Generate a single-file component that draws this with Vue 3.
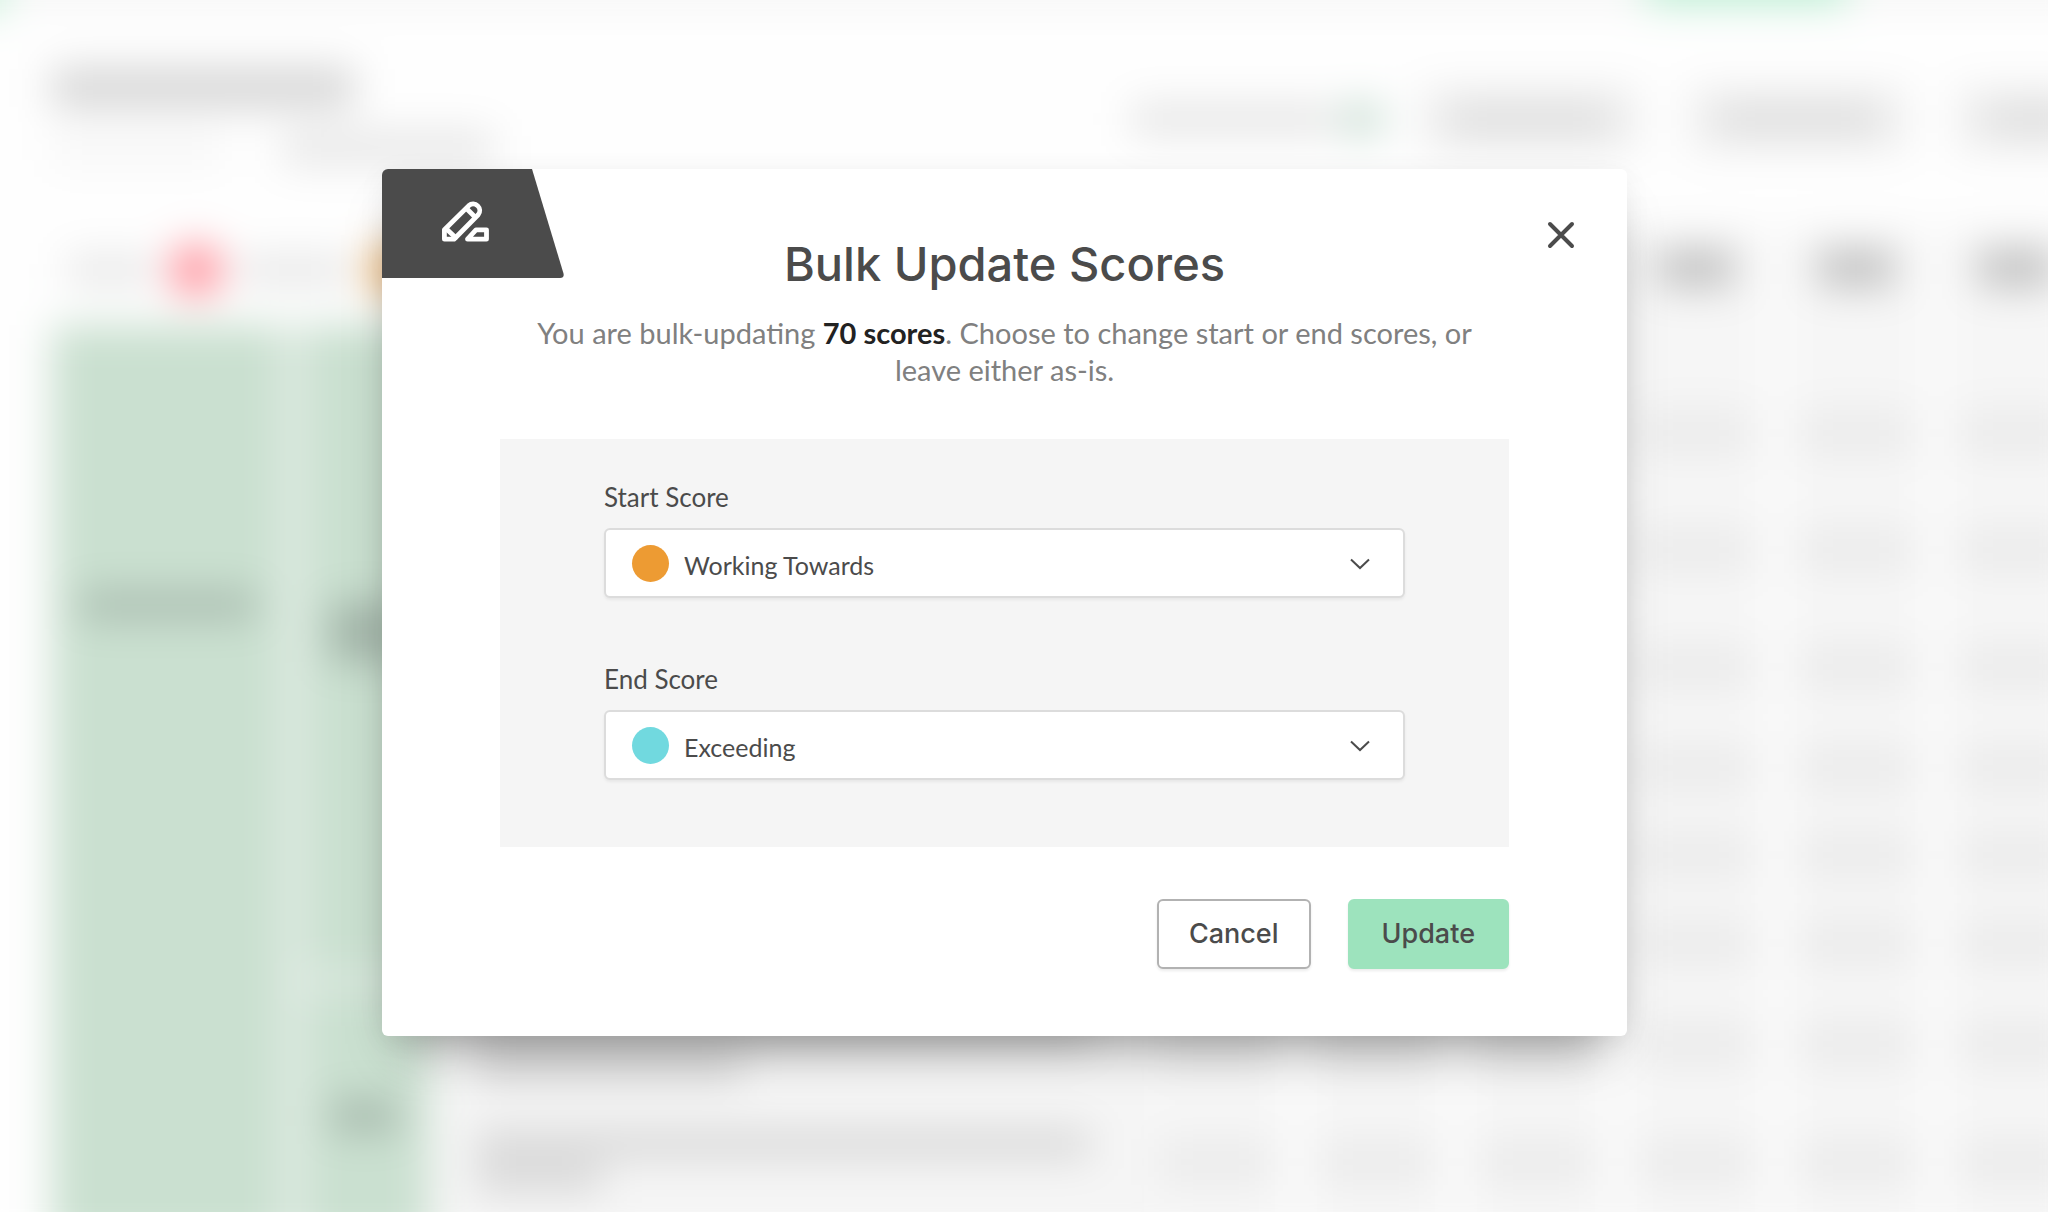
<script setup>
import { ref } from 'vue'

const scores = [
  { name: 'Emerging', color: '#fb8c96' },
  { name: 'Working Towards', color: '#ed9b33' },
  { name: 'Expected', color: '#9de3bd' },
  { name: 'Exceeding', color: '#71d9df' },
]
const fields = ref([
  { id: 'start-score', label: 'Start Score', value: 'Working Towards' },
  { id: 'end-score', label: 'End Score', value: 'Exceeding' },
])
const colorOf = (name) => scores.find((s) => s.name === name).color

const rowHeights = [114, 120, 113, 90, 84, 91, 112, 124, 120]
</script>

<template>
  <div class="page">
    <div class="backdrop" aria-hidden="true">
      <div class="topbar">
        <i class="brand"></i>
        <i class="topbar-action"></i>
      </div>
      <div class="header">
        <div class="heading">
          <i class="heading-title"></i>
          <div class="heading-tabs">
            <i class="tab-one"></i>
            <i class="tab-two"></i>
          </div>
        </div>
        <div class="toolbar">
          <i class="tool-text"></i>
          <i class="tool-toggle"></i>
          <span v-for="n in 3" :key="n" class="tool-button"><i></i></span>
        </div>
      </div>
      <div class="board">
        <div class="board-left">
          <div class="legend">
            <i class="legend-text"></i>
            <i class="legend-dot red"></i>
            <i class="legend-text wide"></i>
            <i class="legend-dot orange"></i>
          </div>
          <div class="groups">
            <div class="group first"><i></i></div>
            <div class="group-column">
              <div class="group top"><i></i></div>
              <div class="group bottom"><i></i></div>
            </div>
            <div class="statements">
              <div class="statement"><i></i><i class="short"></i></div>
              <div class="statement"><i></i><i class="shorter"></i></div>
            </div>
          </div>
        </div>
        <div class="columns">
          <div v-for="c in 7" :key="c" class="column">
            <div class="column-head"><i></i></div>
            <div v-for="(h, r) in rowHeights" :key="r" class="cell" :style="{ height: h + 'px' }"><i></i></div>
          </div>
        </div>
      </div>
    </div>

    <div class="overlay">
      <section class="dialog" role="dialog" aria-modal="true" aria-labelledby="dialog-title">
        <svg class="corner" viewBox="0 0 182 109" width="182" height="109" aria-hidden="true">
          <path d="M0 6a6 6 0 0 1 6-6H150L181.500 104.500Q182.500 109 178 109H0Z" fill="#4b4b4b" />
          <g transform="translate(60 32)" fill="none" stroke="#fff" stroke-width="4.800" stroke-linejoin="round" stroke-linecap="round">
            <path d="M2.400 38.200V28.800L26.800 4.600A6.600 6.600 0 0 1 36.200 13.800L12 38.200Z" />
            <path d="M25 8L33 16M4.500 28L13.500 36.500" />
            <path d="M34 28.800H44.500V38.200H25.500Z" />
          </g>
        </svg>
        <button class="close" type="button" aria-label="Close">
          <svg viewBox="0 0 28 28" width="28" height="28" aria-hidden="true">
            <path d="M3 3L25 25M25 3L3 25" fill="none" stroke="#4b4b4b" stroke-width="4" stroke-linecap="round" />
          </svg>
        </button>

        <h1 id="dialog-title">Bulk Update Scores</h1>
        <p class="intro">
          You are bulk-updating <strong>70 scores</strong>. Choose to change start or end scores, or leave either as-is.
        </p>

        <form class="panel" @submit.prevent>
          <div v-for="field in fields" :key="field.id" class="field">
            <label :for="field.id">{{ field.label }}</label>
            <div class="select-box">
              <span class="dot" :style="{ background: colorOf(field.value) }"></span>
              <select :id="field.id" v-model="field.value">
                <option v-for="s in scores" :key="s.name">{{ s.name }}</option>
              </select>
              <svg class="chevron" viewBox="0 0 20 12" width="20" height="12" aria-hidden="true">
                <path d="M1 1.500L10 10L19 1.500" fill="none" stroke="#4b4b4b" stroke-width="2" />
              </svg>
            </div>
          </div>
        </form>

        <div class="actions">
          <button class="button cancel" type="button">Cancel</button>
          <button class="button update" type="button">Update</button>
        </div>
      </section>
    </div>
  </div>
</template>

<style>
body {
  background: #fff;
  overflow: hidden;
}
</style>

<style scoped>
* {
  box-sizing: border-box;
}
.page {
  position: relative;
  min-height: 100vh;
  overflow: hidden;
  font-family: Lato, "Liberation Sans", sans-serif;
  color: #4b4b4b;
}

/* Blurred board behind the dialog */
.backdrop {
  position: absolute;
  inset: -40px;
  overflow: hidden;
  background: #fefefe;
  filter: blur(20px);
}
.backdrop i {
  display: block;
  flex: none;
}
.topbar {
  display: flex;
  justify-content: space-between;
  height: 44px;
  padding-right: 242px;
  background: #f5f5f5;
}
.brand {
  width: 44px;
  height: 52px;
  background: #c5f0d8;
}
.topbar-action {
  width: 200px;
  background: #b8ecd0;
}
.header {
  display: flex;
  justify-content: space-between;
  height: 186px;
  padding: 64px 0 0 92px;
}
.heading-title {
  width: 302px;
  height: 40px;
  background: #d5d5d5;
}
.heading-tabs {
  display: flex;
  gap: 60px;
  margin-top: 24px;
}
.tab-one {
  width: 170px;
  height: 32px;
  background: #f6f6f6;
}
.tab-two {
  width: 210px;
  height: 32px;
  background: #e5e5e5;
}
.toolbar {
  display: flex;
  align-items: center;
  height: 72px;
  margin: 15px -136px 0 0;
}
.tool-text {
  width: 200px;
  height: 28px;
  background: #e2e2e2;
}
.tool-toggle {
  width: 40px;
  height: 30px;
  margin: 0 38px 0 10px;
  background: #c2d9cd;
}
.tool-button {
  display: flex;
  align-items: center;
  justify-content: center;
  width: 220px;
  height: 66px;
  margin-right: 48px;
  background: #f0f0f0;
}
.tool-button i {
  width: 160px;
  height: 28px;
  background: #dcdcdc;
}
.board {
  display: flex;
  justify-content: space-between;
  padding-left: 92px;
}
.board-left {
  flex: 1;
}
.legend {
  display: flex;
  align-items: center;
  height: 135px;
  padding: 24px 0 0 16px;
}
.legend-text {
  width: 84px;
  height: 28px;
  background: #e5e5e5;
}
.legend-text.wide {
  width: 110px;
}
.legend-dot {
  width: 52px;
  height: 52px;
  margin: 0 18px;
  border-radius: 50%;
}
.red {
  background: #ff8f99;
}
.orange {
  background: #f3b970;
}
.groups {
  display: flex;
  height: 920px;
  background: #f5f5f5;
}
.group {
  display: flex;
  align-items: center;
  justify-content: center;
  background: #cae0d0;
}
.group i {
  height: 24px;
  background: #a3b5a9;
}
.group.first {
  width: 232px;
  align-items: flex-start;
  padding-top: 268px;
}
.group.first i {
  width: 176px;
}
.group-column {
  display: flex;
  flex-direction: column;
  gap: 12px;
  padding-left: 18px;
  background: #ebf1ed;
}
.group.top {
  width: 126px;
  height: 650px;
  padding-bottom: 36px;
}
.group.top i {
  width: 70px;
  height: 60px;
}
.group.bottom {
  width: 126px;
  height: 258px;
}
.group.bottom i {
  width: 66px;
  height: 30px;
}
.statements {
  flex: 1;
  padding: 694px 0 0 48px;
}
.statement {
  height: 112px;
}
.statement i {
  width: 614px;
  height: 26px;
  margin-bottom: 8px;
  background: #d4d4d4;
}
.statement .short {
  width: 266px;
}
.statement .shorter {
  width: 126px;
}
.columns {
  display: flex;
  gap: 16px;
  margin: 36px -160px 0 0;
}
.column {
  width: 144px;
  background: #f6f6f6;
}
.column-head {
  height: 150px;
  padding: 24px 34px;
}
.column-head i {
  height: 36px;
  background: #bdbdbd;
}
.cell {
  display: flex;
  align-items: center;
  justify-content: center;
}
.cell i {
  width: 112px;
  height: 46px;
  background: #ebebeb;
}

/* Dialog */
.overlay {
  position: relative;
  display: flex;
  align-items: center;
  justify-content: center;
  min-height: 100vh;
  padding: 0 39px 7px 0;
}
.dialog {
  position: relative;
  width: 1245px;
  max-width: 100%;
  padding: 69px 118px 67px;
  border-radius: 6px;
  background: #fff;
  box-shadow: 0 28px 50px -20px rgba(0, 0, 0, 0.38), 0 4px 28px rgba(0, 0, 0, 0.05);
}
.corner {
  position: absolute;
  top: 0;
  left: 0;
}
.close {
  position: absolute;
  top: 52px;
  right: 52px;
  display: flex;
  padding: 0;
  border: 0;
  background: none;
}
h1 {
  margin: 0;
  font: 500 47px/52px Inter, "Liberation Sans", sans-serif;
  text-align: center;
}
.intro {
  margin: 24px 0 51px;
  padding: 0 24px;
  font-size: 29px;
  line-height: 37px;
  text-align: center;
  color: #808080;
}
.intro strong {
  font-weight: 700;
  color: #222;
}
.panel {
  display: flex;
  flex-direction: column;
  gap: 64px;
  padding: 41px 104px 67px;
  background: #f5f5f5;
}
.field {
  display: flex;
  flex-direction: column;
  gap: 14px;
}
label {
  font-size: 26px;
  line-height: 34px;
}
.select-box {
  position: relative;
}
select {
  display: block;
  width: 100%;
  height: 70px;
  padding: 4px 80px 0 78px;
  border: 2px solid #dcdcdc;
  border-radius: 6px;
  appearance: none;
  background: #fff;
  box-shadow: 0 2px 3px rgba(0, 0, 0, 0.06);
  font: 25px/34px Lato, "Liberation Sans", sans-serif;
  color: #4b4b4b;
}
.dot {
  position: absolute;
  top: 17px;
  left: 28px;
  width: 37px;
  height: 37px;
  border-radius: 50%;
}
.chevron {
  position: absolute;
  top: 30px;
  right: 35px;
  pointer-events: none;
}
.actions {
  display: flex;
  justify-content: flex-end;
  gap: 37px;
  margin-top: 52px;
}
.button {
  height: 70px;
  padding: 0 30px;
  border: 2px solid #9de3bd;
  border-radius: 6px;
  background: #9de3bd;
  box-shadow: 0 2px 3px rgba(0, 0, 0, 0.08);
  font: 500 27px/32px Inter, "Liberation Sans", sans-serif;
  color: #4b4b4b;
}
.update {
  padding: 0 32px;
}
.cancel {
  border-color: #b2b2b2;
  background: #fff;
}
</style>
